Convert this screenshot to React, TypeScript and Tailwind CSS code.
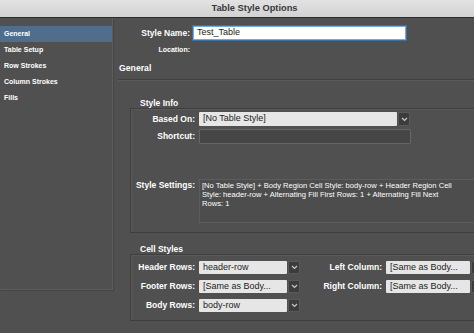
import React from "react";

const font = { fontFamily: '"Liberation Sans", Arial, sans-serif' };

const Chevron = () => (
  <svg width="7" height="5" viewBox="0 0 7 5" fill="none">
    <path d="M1 1 L3.5 3.5 L6 1" stroke="#c8c8c8" strokeWidth="1.2" />
  </svg>
);

const Dropdown = ({ value, width }: { value: string; width: string }) => (
  <div className={`flex h-full ${width} shrink-0 gap-px`}>
    <div className="flex flex-1 items-center overflow-hidden whitespace-nowrap rounded-[1px] bg-[#e6e6e6] pl-[4px] text-[9px] text-[#1c1c1c]">
      {value}
    </div>
    <div className="flex w-[12px] items-center justify-center rounded-[1px] border border-[#5a5a5a] bg-[#3c3c3c]">
      <Chevron />
    </div>
  </div>
);

const navItems = ["General", "Table Setup", "Row Strokes", "Column Strokes", "Fills"];

export default function App() {
  return (
    <div className="h-[333px] w-[474px] overflow-hidden bg-[#505050] text-white" style={font}>
      {/* title bar */}
      <div className="flex h-[18px] items-center justify-center border-b border-[#2c2c2c] bg-gradient-to-b from-[#e2e2e2] to-[#d2d2d2] pl-[35px] text-[9.3px] font-bold text-[#383838]">
        Table Style Options
      </div>

      <div className="flex">
        {/* sidebar */}
        <div className="h-[272px] w-[113px] shrink-0 border-r border-b border-[#5e5e5e] pt-[8px] shadow-[1px_1px_0_#454545]">
          {navItems.map((item, i) => (
            <div
              key={item}
              className={`flex h-[16px] items-center pl-[4px] text-[7px] font-bold ${i === 0 ? "bg-[#506d8b]" : ""}`}
            >
              {item}
            </div>
          ))}
        </div>

        {/* main */}
        <div className="flex min-w-0 flex-1 flex-col">
          <div className="mt-[8px] flex h-[14px] items-center gap-[3px]">
            <div className="w-[77px] shrink-0 text-right text-[8.5px] font-bold">Style Name:</div>
            <div className="flex h-full w-[213px] items-center border border-[#78a9dc] bg-white pl-[3px] text-[9px] text-[#1c1c1c] shadow-[0_0_0_1px_#3f6f9f]">
              Test_Table
            </div>
          </div>

          <div className="mt-[5px] flex h-[10px] items-center">
            <div className="w-[77px] text-right text-[7px] font-bold">Location:</div>
          </div>

          <div className="ml-[6px] mt-[8px] flex h-[12px] items-center text-[8.7px] font-bold">General</div>

          <div className="ml-[5px] mt-[4px] h-px bg-[#404040]" />
          <div className="ml-[5px] h-px bg-[#5a5a5a]" />

          {/* Style Info */}
          <div className="ml-[27px] mt-[18px] flex h-[9px] items-center text-[8.5px] font-bold">Style Info</div>
          <div className="ml-[17px] flex h-[125px] flex-col border border-r-0 border-[#3e3e3e] shadow-[inset_1px_1px_0_#5a5a5a]">
            <div className="mt-[3px] flex h-[14px] items-center gap-[4px]">
              <div className="w-[64px] shrink-0 text-right text-[8.5px] font-bold">Based On:</div>
              <Dropdown value="[No Table Style]" width="w-[211px]" />
            </div>
            <div className="mt-[3px] flex h-[15px] items-center gap-[4px]">
              <div className="w-[64px] shrink-0 text-right text-[8.5px] font-bold">Shortcut:</div>
              <div className="h-full w-[212px] shrink-0 rounded-[1px] border border-[#666] bg-[#464646]" />
            </div>
            <div className="mt-[35px] flex h-[44px] gap-[4px]">
              <div className="w-[64px] shrink-0 pt-[2px] text-right text-[8.5px] font-bold leading-[9px] whitespace-nowrap">
                Style Settings:
              </div>
              <div className="flex-1 border border-r-0 border-[#5c5c5c] bg-[#4d4d4d] pl-[2px] pt-[1px] text-[7.6px] leading-[9px] whitespace-nowrap">
                <div>[No Table Style] + Body Region Cell Style: body-row + Header Region Cell</div>
                <div>Style: header-row + Alternating Fill First Rows: 1 + Alternating Fill Next</div>
                <div>Rows: 1</div>
              </div>
            </div>
          </div>

          {/* Cell Styles */}
          <div className="ml-[27px] mt-[12px] flex h-[9px] items-center text-[8.5px] font-bold">Cell Styles</div>
          <div className="ml-[17px] flex h-[67px] flex-col gap-[6px] border border-r-0 border-[#3e3e3e] pt-[6px] shadow-[inset_1px_1px_0_#5a5a5a]">
            <div className="flex h-[13px] items-center gap-[4px]">
              <div className="w-[64px] shrink-0 text-right text-[8.5px] font-bold">Header Rows:</div>
              <Dropdown value="header-row" width="w-[101px]" />
              <div className="w-[78px] shrink-0 text-right text-[8.5px] font-bold">Left Column:</div>
              <Dropdown value="[Same as Body..." width="w-[97px]" />
            </div>
            <div className="flex h-[13px] items-center gap-[4px]">
              <div className="w-[64px] shrink-0 text-right text-[8.5px] font-bold">Footer Rows:</div>
              <Dropdown value="[Same as Body..." width="w-[101px]" />
              <div className="w-[78px] shrink-0 text-right text-[8.5px] font-bold">Right Column:</div>
              <Dropdown value="[Same as Body..." width="w-[97px]" />
            </div>
            <div className="flex h-[13px] items-center gap-[4px]">
              <div className="w-[64px] shrink-0 text-right text-[8.5px] font-bold">Body Rows:</div>
              <Dropdown value="body-row" width="w-[101px]" />
            </div>
          </div>
        </div>
      </div>
    </div>
  );
}
